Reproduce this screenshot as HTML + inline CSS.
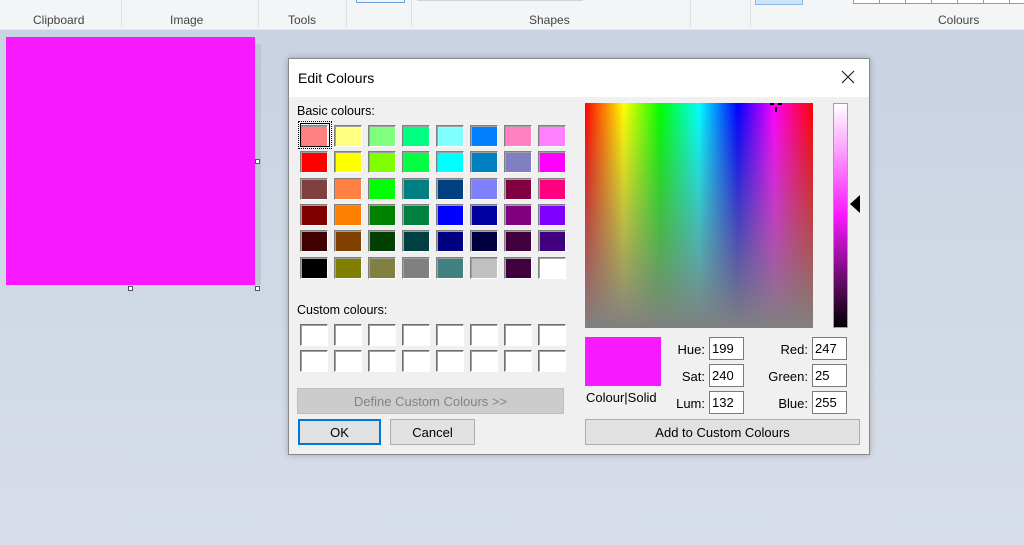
<!DOCTYPE html>
<html><head><meta charset="utf-8"><style>
*{margin:0;padding:0;box-sizing:border-box}
body{width:1024px;height:545px;overflow:hidden;background:linear-gradient(#c8d2e1,#d7dee9);font-family:"Liberation Sans",sans-serif;position:relative;font-size:12px;color:#000}
.a{position:absolute}
.rib{left:0;top:0;width:1024px;height:30px;background:#f4f5f6;border-bottom:1px solid #e3e6ea}
.rl{top:13px;font-size:12px;color:#444}
.sep{top:0;width:1px;height:27px;background:#dde0e4}
.sw{position:absolute;width:28px;height:22px;border:1px solid;border-color:#808080 #fff #fff #808080;box-shadow:inset 1px 1px 0 #a0a0a0}
.cs{position:absolute;width:28px;height:22px;background:#fff;border:1px solid;border-color:#6e6e6e #fff #fff #6e6e6e;box-shadow:inset 1px 1px 0 #a0a0a0}
.btn{position:absolute;background:#e1e1e1;border:1px solid #adadad;text-align:center;font-size:13px}
.in{position:absolute;width:35px;height:23px;background:#fff;border:1px solid #7a7a7a;font-size:13px;padding:3px 0 0 2px}
.lb{position:absolute;font-size:13px;text-align:right;width:60px}
.h{position:absolute;width:5px;height:5px;border:1px solid #555;background:#fff}
</style></head><body>
<div class="a rib"></div>
<div class="a rl" style="left:33px">Clipboard</div>
<div class="a rl" style="left:170px">Image</div>
<div class="a rl" style="left:288px">Tools</div>
<div class="a rl" style="left:529px">Shapes</div>
<div class="a rl" style="left:938px">Colours</div>
<div class="a sep" style="left:121px"></div><div class="a sep" style="left:258px"></div><div class="a sep" style="left:346px"></div><div class="a sep" style="left:411px"></div><div class="a sep" style="left:690px"></div><div class="a sep" style="left:750px"></div>
<div class="a" style="left:356px;top:0;width:49px;height:3px;border:1px solid #6aa5e0;border-top:0"></div>
<div class="a" style="left:417px;top:0;width:166px;height:1px;background:#cfd2d6"></div>
<div class="a" style="left:755px;top:0;width:48px;height:5px;background:#cce4f7;border:1px solid #8bb8e4;border-top:0"></div>
<div class="a" style="left:853px;top:0;width:171px;height:4px;border-bottom:1px solid #999;background:repeating-linear-gradient(90deg,#999 0 1px,#fff 1px 26px)"></div>

<div class="a" style="left:6px;top:37px;width:249px;height:248px;background:#f719ff"></div>
<div class="a" style="left:255px;top:44px;width:6px;height:241px;background:#bcc6d6"></div>
<div class="h" style="left:255px;top:159px"></div><div class="h" style="left:128px;top:286px"></div><div class="h" style="left:255px;top:286px"></div>

<div class="a" style="left:288px;top:58px;width:582px;height:397px;background:#f0f0f0;border:1px solid #8a8a8a;box-shadow:0 0 6px rgba(0,0,0,.25)">
 <div class="a" style="left:0;top:0;width:580px;height:38px;background:#fff"></div>
 <div class="a" style="left:9px;top:11px;font-size:14px">Edit Colours</div>
 <svg class="a" style="left:552px;top:11px" width="14" height="14"><path d="M1 1L13 13M13 1L1 13" stroke="#222" stroke-width="1.2"/></svg>
</div>
<div class="a" style="left:297px;top:104px;font-size:12.5px">Basic colours:</div>
<div id="basic"></div>
<div class="a" style="left:297px;top:303px;font-size:12.5px">Custom colours:</div>
<div id="cust"></div>
<div class="a" style="left:298px;top:121px;width:34px;height:28px;border:1px dotted #000"></div>
<div class="a" style="left:300px;top:123px;width:30px;height:24px;border:1px solid #000"></div>

<div class="btn" style="left:297px;top:388px;width:267px;height:26px;background:#cccccc;border-color:#bfbfbf;color:#838383;padding-top:5px">Define Custom Colours &gt;&gt;</div>
<div class="btn" style="left:298px;top:419px;width:83px;height:26px;border:2px solid #0078d7;padding-top:4px">OK</div>
<div class="btn" style="left:390px;top:419px;width:85px;height:26px;padding-top:5px">Cancel</div>
<div class="btn" style="left:585px;top:419px;width:275px;height:26px;padding-top:5px">Add to Custom Colours</div>

<div class="a" style="left:585px;top:103px;width:228px;height:225px;background:linear-gradient(90deg,#f00,#ff0 17%,#0f0 33%,#0ff 50%,#00f 67%,#f0f 83%,#f00)"></div>
<div class="a" style="left:585px;top:103px;width:228px;height:225px;background:linear-gradient(rgba(128,128,128,0),#808080)"></div>
<div class="a" style="left:770px;top:103px;width:4px;height:2px;background:#000"></div><div class="a" style="left:778px;top:103px;width:4px;height:2px;background:#000"></div><div class="a" style="left:775px;top:107px;width:2px;height:5px;background:#000"></div>
<div class="a" style="left:833px;top:103px;width:15px;height:225px;border:1px solid #a0a0a0;background:linear-gradient(#fff,#f719ff 50%,#000)"></div>
<svg class="a" style="left:850px;top:195px" width="10" height="18"><path d="M10 0L0 9L10 18Z" fill="#000"/></svg>

<div class="a" style="left:585px;top:337px;width:76px;height:49px;background:#f719ff"></div>
<div class="a" style="left:586px;top:390px;font-size:13px">Colour|Solid</div>
<div class="lb" style="left:645px;top:342px">Hue:</div><div class="lb" style="left:645px;top:369px">Sat:</div><div class="lb" style="left:645px;top:396px">Lum:</div>
<div class="lb" style="left:748px;top:342px">Red:</div><div class="lb" style="left:748px;top:369px">Green:</div><div class="lb" style="left:748px;top:396px">Blue:</div>
<div class="in" style="left:709px;top:337px">199</div><div class="in" style="left:709px;top:364px">240</div><div class="in" style="left:709px;top:391px">132</div>
<div class="in" style="left:812px;top:337px">247</div><div class="in" style="left:812px;top:364px">25</div><div class="in" style="left:812px;top:391px">255</div>

<script>
var c=["#FF8080","#FFFF80","#80FF80","#00FF80","#80FFFF","#0080FF","#FF80C0","#FF80FF",
"#FF0000","#FFFF00","#80FF00","#00FF40","#00FFFF","#0080C0","#8080C0","#FF00FF",
"#804040","#FF8040","#00FF00","#008080","#004080","#8080FF","#800040","#FF0080",
"#800000","#FF8000","#008000","#008040","#0000FF","#0000A0","#800080","#8000FF",
"#400000","#804000","#004000","#004040","#000080","#000040","#400040","#400080",
"#000000","#808000","#808040","#808080","#408080","#C0C0C0","#400040","#FFFFFF"];
var ys=[125,151,178,204,230,257],h="";
for(var r=0;r<6;r++)for(var k=0;k<8;k++)h+='<div class="sw" style="left:'+(300+34*k)+'px;top:'+ys[r]+'px;background:'+c[r*8+k]+'"></div>';
document.getElementById("basic").innerHTML=h;h="";
for(var r=0;r<2;r++)for(var k=0;k<8;k++)h+='<div class="cs" style="left:'+(300+34*k)+'px;top:'+(324+26*r)+'px"></div>';
document.getElementById("cust").innerHTML=h;
</script>
</body></html>
